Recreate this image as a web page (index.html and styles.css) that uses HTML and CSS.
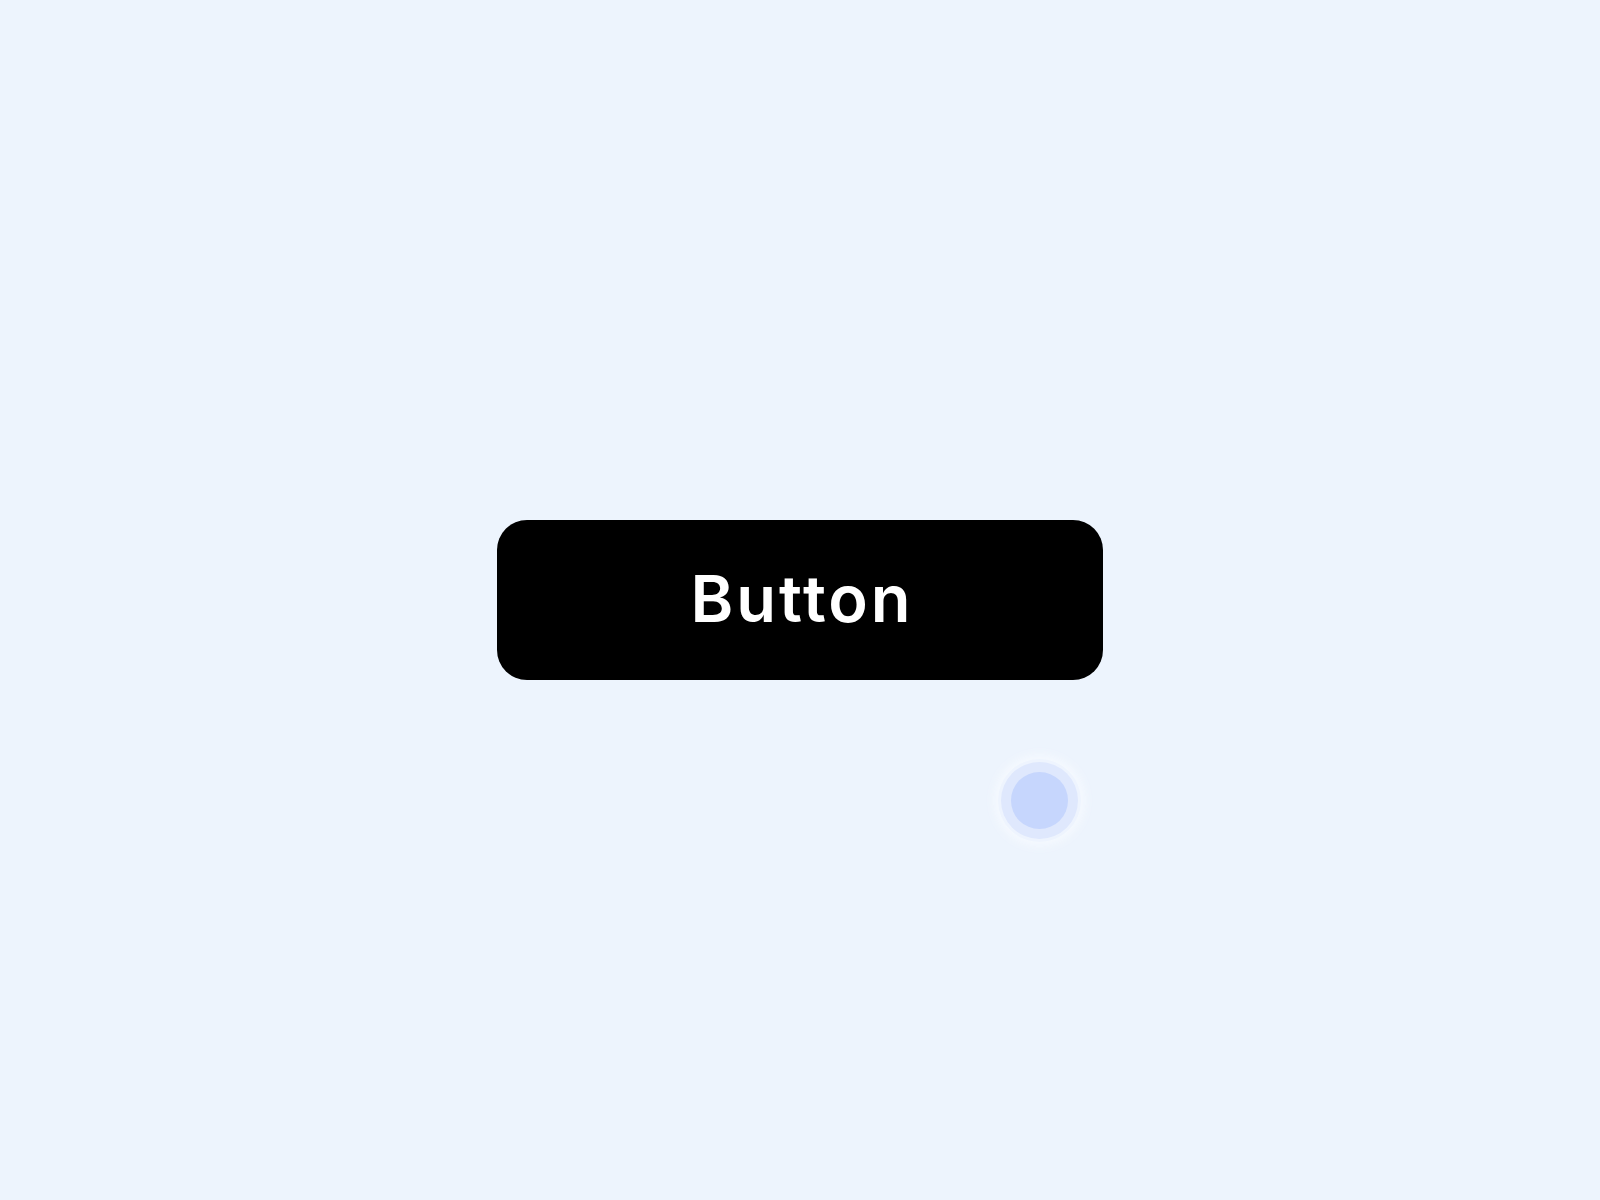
FILE: index.html
```html
<!DOCTYPE html>
<html lang="en">
<head>
<meta charset="utf-8">
<title>Button</title>
<link rel="stylesheet" href="styles.css">
</head>
<body>
  <main class="stage">
    <button class="btn" type="button">Button</button>
    <span class="cursor" aria-hidden="true"></span>
  </main>
</body>
</html>
```

FILE: styles.css
```css
* { box-sizing: border-box; }

html, body {
  margin: 0;
  height: 100%;
}

body {
  background: #edf4fd;
  font-family: Inter, "Liberation Sans", Arial, sans-serif;
}

.stage {
  position: relative;
  width: 100%;
  height: 100%;
  display: flex;
  align-items: center;
  justify-content: center;
}

.btn {
  width: 606px;
  height: 160px;
  border: 0;
  border-radius: 30px;
  background: #000;
  color: #fff;
  font-family: inherit;
  font-size: 65px;
  font-weight: 600;
  letter-spacing: 3px;
  line-height: 1;
  padding: 0 0 3px 4px;
  cursor: pointer;
}

/* touch indicator hovering under the button */
.cursor {
  position: absolute;
  left: 1011px;
  top: 772px;
  width: 57px;
  height: 57px;
  border-radius: 50%;
  background: #c6d6fd;
  box-shadow:
    0 0 0 10px #dfe8fd,
    0 0 0 13px #eef4fe,
    0 0 12px 16px rgba(248, 251, 255, 0.95);
}
```
